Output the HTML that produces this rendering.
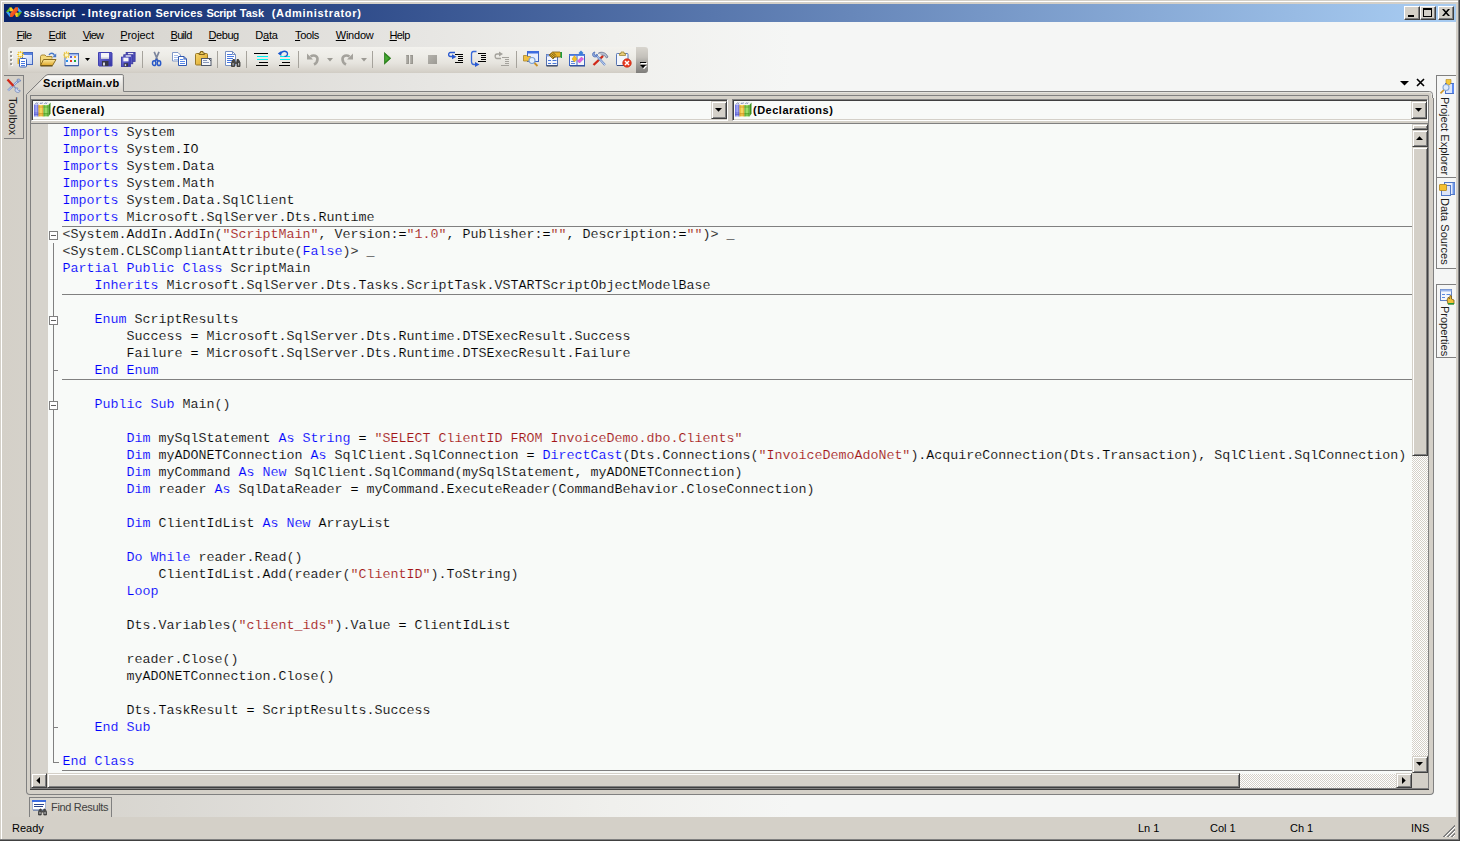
<!DOCTYPE html>
<html>
<head>
<meta charset="utf-8">
<title>ssisscript</title>
<style>
html,body{margin:0;padding:0;}
body{width:1460px;height:841px;overflow:hidden;background:#d4d0c8;font-family:"Liberation Sans",sans-serif;font-size:11px;color:#000;position:relative;}
div,span,pre{box-sizing:border-box;}
.abs{position:absolute;}
#win{position:absolute;left:0;top:0;width:1460px;height:841px;background:#d4d0c8;overflow:hidden;}
/* outer window edge */
#edge-l{left:1px;top:1px;width:1px;height:838px;background:#fff;}
#edge-t{left:1px;top:1px;width:1457px;height:1px;background:#fff;}
#edge-r1{left:1458px;top:0;width:1px;height:840px;background:#808080;}
#edge-r2{left:1459px;top:0;width:1px;height:841px;background:#404040;}
#edge-b1{left:0;top:839px;width:1459px;height:1px;background:#808080;}
#edge-b2{left:0;top:840px;width:1460px;height:1px;background:#404040;}
/* upper gradient strip (menu + toolbar background) */
#topgrad{left:2px;top:22px;width:1454px;height:795px;background:linear-gradient(90deg,#d4d0c8 0px,#dad8d3 160px,#e6e5e2 410px,#f0f0ed 610px,#f5f6f5 790px,#f5f6f5 1454px);}
#title{left:4px;top:4px;width:1452px;height:18px;background:linear-gradient(90deg,#0a246a 0px,#a6caf0 1420px,#a6caf0 1452px);}
#title .txt{position:absolute;left:0;top:2px;font-weight:bold;font-size:11px;color:#fff;white-space:nowrap;line-height:14px;}
#title .txt span{position:absolute;top:0;white-space:nowrap;}
.tbtn{position:absolute;top:2px;width:16px;height:14px;background:#d4d0c8;border:1px solid;border-color:#fff #404040 #404040 #fff;box-shadow:inset -1px -1px 0 #808080;}
#menu{left:4px;top:23px;width:600px;height:23px;}
#menu span{position:absolute;top:6px;font-size:11px;line-height:13px;white-space:nowrap;}
#menu span u{text-decoration:underline;}
.tsep{top:51px;width:1px;height:17px;background:#a6a39c;}

.vtext{writing-mode:vertical-rl;font-size:11px;line-height:14px;white-space:nowrap;color:#1c1c1c;}
.combo{height:22px;background:#f8faf8;border:1px solid;border-color:#808080 #fff #fff #808080;box-shadow:inset 1px 1px 0 #404040,inset -1px -1px 0 #d4d0c8;}
.combo .bk{left:2px;top:2px;}
.combo .ctext{position:absolute;top:3px;letter-spacing:0.5px;font-weight:bold;font-size:11px;line-height:14px;white-space:nowrap;}
.cbtn{position:absolute;top:1px;width:16px;height:18px;background:#d4d0c8;border:1px solid;border-color:#d4d0c8 #404040 #404040 #d4d0c8;box-shadow:inset 1px 1px 0 #fff,inset -1px -1px 0 #808080;}
#code{position:absolute;left:31.5px;top:0;margin:0;font-family:"Liberation Mono",monospace;font-size:13.3333px;line-height:17px;color:#000;white-space:pre;-webkit-text-stroke:0.14px #f8faf8;}
#code i{font-style:normal;-webkit-text-stroke:0;}
#code .k{color:#0000ff;}
#code .s{color:#a31515;}
.hsep{left:31px;width:1350px;height:1px;background:#808080;}
.obox{left:18px;width:9px;height:9px;border:1px solid #808080;background:#fff;}
.obox:after{content:"";position:absolute;left:1px;top:3px;width:5px;height:1px;background:#606060;}

.dith{background-color:#e9e7e3;background-image:conic-gradient(#fff 25%,#d4d0c8 0 50%,#fff 0 75%,#d4d0c8 0);background-size:2px 2px;}
.sbtn{background:#d4d0c8;border:1px solid;border-color:#d4d0c8 #404040 #404040 #d4d0c8;box-shadow:inset 1px 1px 0 #fff,inset -1px -1px 0 #808080;}
.rtab{width:20px;border:1px solid #808080;border-right:none;background:#f5f6f5;}
#status span{position:absolute;top:5px;font-size:11px;line-height:13px;white-space:nowrap;}
</style>
</head>
<body>
<div id="win">
<svg width="0" height="0" style="position:absolute"><defs>
<linearGradient id="gb1" x1="0" y1="0" x2="1" y2="0"><stop offset="0" stop-color="#6a6ee0"/><stop offset="0.5" stop-color="#a8aef8"/><stop offset="1" stop-color="#5a5ed0"/></linearGradient>
<linearGradient id="gb2" x1="0" y1="0" x2="1" y2="0"><stop offset="0" stop-color="#e8a820"/><stop offset="0.5" stop-color="#fce070"/><stop offset="1" stop-color="#e0a020"/></linearGradient>
<linearGradient id="gb3" x1="0" y1="0" x2="1" y2="0"><stop offset="0" stop-color="#58b030"/><stop offset="0.5" stop-color="#a8e878"/><stop offset="1" stop-color="#50a828"/></linearGradient>
</defs></svg>
<div class="abs" id="topgrad"></div>
<div class="abs" id="title">
  <svg class="abs" style="left:2px;top:3px" width="16" height="10" viewBox="0 0 16 10">
    <defs><linearGradient id="gred" x1="0" y1="0" x2="1" y2="1"><stop offset="0" stop-color="#ff9a28"/><stop offset="0.6" stop-color="#f04a20"/><stop offset="1" stop-color="#c82010"/></linearGradient></defs>
    <path d="M0 5L3.600 0.500L6 0.500L4 5z" fill="#58b828"/>
    <path d="M3.600 0.500H5.500L8 3.500L4 5z" fill="#fcd020"/>
    <path d="M0 5H4L4.500 10H3.800z" fill="#38a0f0"/>
    <path d="M12 0.200L16 5H12z" fill="#38a8f8"/>
    <path d="M16 5L12.500 9.800H10.500L12 5z" fill="#60b828"/>
    <path d="M8.500 6L12 5L11.500 10H10z" fill="#fcc818"/>
    <path d="M4 10L4.300 6.500L9.500 0.200H12L12 3.500L6.500 10z" fill="url(#gred)"/>
    <circle cx="3.900" cy="5" r="0.950" fill="#0a246a"/>
    <circle cx="12" cy="5.100" r="0.950" fill="#0a246a"/>
  </svg>
  <div class="txt"><span style="left:19.5px;letter-spacing:0.07px">ssisscript</span><span style="left:77.5px">-</span><span style="left:83.7px;letter-spacing:0.67px">Integration</span><span style="left:151.5px;letter-spacing:0.28px">Services</span><span style="left:202.5px;letter-spacing:-0.3px">Script</span><span style="left:235.7px;letter-spacing:0.08px">Task</span><span style="left:267.7px;letter-spacing:0.7px">(Administrator)</span></div>
  <div class="tbtn" style="left:1400px"><div class="abs" style="left:3px;top:8px;width:6px;height:2px;background:#000"></div></div>
  <div class="tbtn" style="left:1416px"><div class="abs" style="left:2px;top:1px;width:9px;height:9px;border:1px solid #000;border-top-width:2px"></div></div>
  <div class="tbtn" style="left:1434px"><svg class="abs" style="left:3px;top:2px" width="8" height="7" viewBox="0 0 8 7"><path d="M0 0h2l2 2.3L6 0h2L5 3.5 8 7H6L4 4.7 2 7H0l3-3.5z" fill="#000"/></svg></div>
</div>
<div class="abs" id="menu">
  <span style="left:12.50px;letter-spacing:-0.74px"><u>F</u>ile</span>
  <span style="left:44.50px;letter-spacing:-0.49px"><u>E</u>dit</span>
  <span style="left:78.75px;letter-spacing:-0.80px"><u>V</u>iew</span>
  <span style="left:116.25px;letter-spacing:-0.08px"><u>P</u>roject</span>
  <span style="left:166.50px;letter-spacing:-0.68px"><u>B</u>uild</span>
  <span style="left:204.50px;letter-spacing:-0.42px"><u>D</u>ebug</span>
  <span style="left:251.25px;letter-spacing:-0.17px">D<u>a</u>ta</span>
  <span style="left:291.00px;letter-spacing:-0.36px"><u>T</u>ools</span>
  <span style="left:331.75px;letter-spacing:-0.23px"><u>W</u>indow</span>
  <span style="left:385.50px;letter-spacing:-0.62px"><u>H</u>elp</span>
</div>
<div class="abs" id="toolbar" style="left:8px;top:47px;width:628px;height:26px;border-radius:3px 0 0 3px;background:linear-gradient(180deg,#f3f2ee 0px,#eeede8 8px,#e6e4de 16px,#d6d2ca 24px,#d0ccc4 26px);"></div>
<div class="abs" id="tbover" style="left:636px;top:47px;width:12px;height:26px;border-radius:0 3px 3px 0;background:linear-gradient(180deg,#d8d5ce 0px,#c4c1bb 10px,#9a9894 19px,#7e7d7a 26px);">
  <div class="abs" style="left:5px;top:16px;width:6px;height:1px;background:#fff"></div>
  <div class="abs" style="left:4px;top:15px;width:6px;height:1px;background:#000"></div>
  <svg class="abs" style="left:4px;top:18px" width="7" height="5" viewBox="0 0 7 5"><path d="M1 1h6L4 4.200z" fill="#fff"/><path d="M0 0h6L3 3.200z" fill="#000"/></svg>
</div>
<!-- grip -->
<div class="abs" style="left:10px;top:51px;width:2px;height:14px;background:repeating-linear-gradient(180deg,#9c9a94 0px,#9c9a94 2px,transparent 2px,transparent 4px);"></div>
<div class="abs" style="left:11px;top:52px;width:2px;height:14px;background:repeating-linear-gradient(180deg,#fff 0px,#fff 2px,transparent 2px,transparent 4px);opacity:.8"></div>
<div class="abs" style="left:10px;top:51px;width:2px;height:14px;background:repeating-linear-gradient(180deg,#9c9a94 0px,#9c9a94 2px,transparent 2px,transparent 4px);"></div>
<!-- separators -->
<div class="abs tsep" style="left:142px"></div>
<div class="abs tsep" style="left:217px"></div>
<div class="abs tsep" style="left:246px"></div>
<div class="abs tsep" style="left:298px"></div>
<div class="abs tsep" style="left:372px"></div>
<div class="abs tsep" style="left:516px"></div>
<!-- 1 new project -->
<svg class="abs" style="left:17px;top:51px" width="17" height="17" viewBox="0 0 17 17">
  <defs><linearGradient id="gw" x1="0" y1="0" x2="1" y2="1"><stop offset="0" stop-color="#fff"/><stop offset="1" stop-color="#b8ccf4"/></linearGradient></defs>
  <rect x="5.5" y="1.5" width="10" height="12" fill="url(#gw)" stroke="#4468c0"/>
  <rect x="6" y="2" width="9" height="2" fill="#5a84e0"/>
  <path d="M3.5 0v7M0 3.5h7M1 1l5 5M6 1l-5 5" stroke="#f4c830" stroke-width="1.2"/>
  <rect x="2" y="2" width="3" height="3" fill="#fff6c0"/>
  <rect x="0.5" y="7" width="2" height="6" fill="#e8b830"/>
  <rect x="2.5" y="7.500" width="7" height="8.500" rx="1" fill="#fff" stroke="#3860b8"/>
  <path d="M4 10.500h4M4 12.500h4M4 14.500h4" stroke="#4878e0" stroke-width="1"/>
</svg>
<!-- 2 open -->
<svg class="abs" style="left:40px;top:51px" width="17" height="17" viewBox="0 0 17 17">
  <defs><linearGradient id="gf" x1="0" y1="0" x2="0" y2="1"><stop offset="0" stop-color="#fbe8a0"/><stop offset="1" stop-color="#e0a828"/></linearGradient></defs>
  <path d="M0.500 14.500V5.500l1-1.500h3.500l1.500 1.500h5.500v2" fill="#f4d878" stroke="#a88838"/>
  <path d="M0.500 14.500L3.500 8.500h12.500l-3.500 6z" fill="url(#gf)" stroke="#8c6c20"/>
  <path d="M0.500 15h12" stroke="#5a4410" stroke-width="1"/>
  <path d="M9 4c1.500-2.500 4.500-2.500 5.500 0.500" fill="none" stroke="#4878c8" stroke-width="1.400"/>
  <path d="M16.200 2.500v3.800h-3.800z" fill="#4878c8"/>
</svg>
<!-- 3 add item -->
<svg class="abs" style="left:63px;top:51px" width="17" height="17" viewBox="0 0 17 17">
  <rect x="2" y="2.500" width="13.500" height="12" fill="#eef2fb" stroke="#4a6eb8"/>
  <rect x="2.500" y="3" width="12.500" height="1.500" fill="#9ab4ec"/>
  <path d="M2 14.800h13.500" stroke="#3a5aa0"/>
  <rect x="7" y="5" width="2" height="2" fill="#5a5ad8"/><rect x="11" y="5" width="2" height="2" fill="#f0a020"/>
  <rect x="3" y="9" width="2" height="2" fill="#2890e8"/><rect x="7" y="9" width="2" height="2" fill="#e83820"/><rect x="11" y="9" width="2" height="2" fill="#20a838"/>
  <path d="M3.500 0.500v7M0 4h7M1 1.500l5 5M6 1.500l-5 5" stroke="#f4c830" stroke-width="1.200"/>
  <rect x="2" y="2.500" width="3" height="3" fill="#fff6c0"/>
</svg>
<svg class="abs" style="left:85px;top:58px" width="5" height="3" viewBox="0 0 5 3"><path d="M0 0h5L2.500 3z" fill="#000"/></svg>
<!-- 4 save -->
<svg class="abs" style="left:98px;top:52px" width="15" height="15" viewBox="0 0 15 15">
  <defs><linearGradient id="gs" x1="0" y1="0" x2="1" y2="1"><stop offset="0" stop-color="#7878e0"/><stop offset="1" stop-color="#3030a0"/></linearGradient></defs>
  <path d="M0.500 0.500h13l0.500 0.500v13h-13l-0.500-0.500z" fill="url(#gs)" stroke="#4040b0"/>
  <rect x="3" y="1" width="8" height="6" fill="#f4f4f8"/>
  <rect x="3" y="5.500" width="8" height="1.500" fill="#c8c8d8"/>
  <rect x="4" y="9" width="6.500" height="5" fill="#383848"/>
  <rect x="5" y="10.500" width="2" height="3" fill="#d8d8e0"/>
</svg>
<!-- 5 save all -->
<svg class="abs" style="left:121px;top:52px" width="15" height="15" viewBox="0 0 16 16">
  <rect x="5.500" y="0.500" width="9.500" height="9.500" fill="#5050b8" stroke="#3c3ca0"/>
  <rect x="7.500" y="1" width="5.500" height="2" fill="#e8e8f4"/>
  <rect x="3" y="3" width="9.500" height="9.500" fill="#5858c0" stroke="#3c3ca0"/>
  <rect x="5" y="3.500" width="5.500" height="2" fill="#e8e8f4"/>
  <rect x="0.500" y="5.500" width="9.500" height="10" fill="url(#gs)" stroke="#4040b0"/>
  <rect x="2.500" y="6" width="5.500" height="4" fill="#f4f4f8"/>
  <rect x="3" y="12" width="4.500" height="3.500" fill="#383848"/>
  <rect x="4" y="13" width="1.500" height="2" fill="#d8d8e0"/>
</svg>
<!-- 6 cut -->
<svg class="abs" style="left:151px;top:51px" width="11" height="16" viewBox="0 0 11 16">
  <path d="M3.200 0.800L6.800 9.500M8 0.800L4.400 9.500" stroke="#7c859c" stroke-width="1.700" fill="none"/>
  <ellipse cx="3.200" cy="12.200" rx="1.700" ry="2.400" fill="none" stroke="#2858c8" stroke-width="1.500"/>
  <ellipse cx="8" cy="12.200" rx="1.700" ry="2.400" fill="none" stroke="#2858c8" stroke-width="1.500"/>
  <path d="M4.200 10l1.400-1.600 1.400 1.600" stroke="#2858c8" stroke-width="1.300" fill="none"/>
</svg>
<!-- 7 copy -->
<svg class="abs" style="left:172px;top:52px" width="16" height="15" viewBox="0 0 16 15">
  <path d="M0.500 0.500h5.500l2.500 2.500v6h-8z" fill="#fff" stroke="#8098c8"/>
  <path d="M2 3.500h4M2 5.500h5M2 7.500h5" stroke="#a8c0ec"/>
  <path d="M6.500 4.500h5.500l2.500 2.500v6.500h-8z" fill="#fff" stroke="#3058b0"/>
  <path d="M8 7.500h3.500M8 9.500h5M8 11.500h5" stroke="#5888e8"/>
  <path d="M12 4.500v2.500h2.500" fill="none" stroke="#3058b0"/>
</svg>
<!-- 8 paste -->
<svg class="abs" style="left:195px;top:51px" width="17" height="16" viewBox="0 0 17 16">
  <defs><linearGradient id="gp" x1="0" y1="0" x2="1" y2="1"><stop offset="0" stop-color="#f8d870"/><stop offset="1" stop-color="#d8a020"/></linearGradient></defs>
  <rect x="0.500" y="2.500" width="12" height="11.500" rx="1" fill="url(#gp)" stroke="#987828"/>
  <path d="M4 3.500v-1.500h1.500v-1.500h2.500v1.500h1.500v1.500z" fill="#e8c860" stroke="#80641c"/>
  <rect x="6.500" y="7.500" width="9.500" height="7" fill="#f4f6fa" stroke="#505868"/>
  <path d="M8 9.500h4M8 11.500h6" stroke="#8898b8"/>
  <path d="M13.500 7.500l2.500 2.500" stroke="#505868"/>
</svg>
<!-- 9 find -->
<svg class="abs" style="left:225px;top:51px" width="16" height="17" viewBox="0 0 16 17">
  <path d="M0.500 0.500h7l3 3v11h-10z" fill="#fff" stroke="#7890c0"/>
  <path d="M2 3.500h5M2 5.500h7M2 7.500h6M2 9.500h5M2 11.500h4" stroke="#4878e0"/>
  <path d="M7.500 0.500v3h3" fill="none" stroke="#7890c0"/>
  <path d="M6.500 15.500v-4l1.500-3h1.500v7zM15 15.500v-4l-1.500-3h-1.500v7z" fill="#484848" stroke="#303030" stroke-width="0.800"/>
  <rect x="9.500" y="10.500" width="2.500" height="2.500" fill="#505050"/>
  <rect x="7.500" y="12" width="1.200" height="2.500" fill="#b0b0b0"/><rect x="13" y="12" width="1.200" height="2.500" fill="#b0b0b0"/>
</svg>
<!-- 10 indent -->
<div class="abs" style="left:254px;top:53px;width:14px;height:1px;background:#000"></div>
<div class="abs" style="left:257px;top:56px;width:11px;height:1px;background:#00f0f0"></div>
<div class="abs" style="left:257px;top:59px;width:11px;height:1px;background:#00f0f0"></div>
<div class="abs" style="left:259px;top:62px;width:9px;height:1px;background:#000"></div>
<div class="abs" style="left:256px;top:65px;width:12px;height:1px;background:#000"></div>
<!-- 11 unindent -->
<svg class="abs" style="left:277px;top:50px" width="15" height="18" viewBox="0 0 15 18">
  <rect x="3" y="6" width="10" height="1" fill="#00f0f0"/>
  <rect x="3" y="9" width="10" height="1" fill="#00f0f0"/>
  <rect x="5" y="12" width="8" height="1" fill="#000"/>
  <rect x="2" y="15" width="11" height="1" fill="#000"/>
  <path d="M4 3.500c1-3 6-3 6.500 0c0.300 1.800-1.500 3-3 2.800" fill="none" stroke="#1858d0" stroke-width="1.300"/>
  <path d="M0.800 3.500l3.500-2.500v5z" fill="#1858d0"/>
</svg>
<!-- 12 undo -->
<svg class="abs" style="left:306px;top:51px" width="14" height="15" viewBox="0 0 14 15">
  <path d="M4.500 5.500c3-2 7-1 7 2.500c0 2.500-1.500 4.500-3.500 5.500" fill="none" stroke="#a4a29c" stroke-width="2.600"/>
  <path d="M1 2.500v6h6z" fill="#a4a29c"/>
</svg>
<svg class="abs" style="left:327px;top:58px" width="6" height="4" viewBox="0 0 6 4"><path d="M0 0h6L3 3.500z" fill="#9c9a94"/></svg>
<!-- 13 redo -->
<svg class="abs" style="left:340px;top:51px" width="14" height="15" viewBox="0 0 14 15">
  <path d="M9.500 5.500c-3-2-7-1-7 2.500c0 2.500 1.500 4.500 3.500 5.500" fill="none" stroke="#a4a29c" stroke-width="2.600"/>
  <path d="M13 2.500v6h-6z" fill="#a4a29c"/>
</svg>
<svg class="abs" style="left:361px;top:58px" width="6" height="4" viewBox="0 0 6 4"><path d="M0 0h6L3 3.500z" fill="#9c9a94"/></svg>
<!-- 15 play -->
<svg class="abs" style="left:384px;top:52px" width="8" height="13" viewBox="0 0 8 13"><path d="M0.300 0.500L6.800 6.300L0.300 12.200z" fill="#2c8c1c" stroke="#186808" stroke-width="0.600"/><path d="M1.200 3l3.800 3.300-3.800 3.400z" fill="#48a834"/></svg>
<!-- 16 pause -->
<div class="abs" style="left:406px;top:55px;width:3px;height:9px;background:#a8a6a0;border:1px solid #98968f;border-left-color:#b4b2ac"></div>
<div class="abs" style="left:410px;top:55px;width:3px;height:9px;background:#a8a6a0;border:1px solid #98968f;border-left-color:#b4b2ac"></div>
<!-- 17 stop -->
<div class="abs" style="left:428px;top:55px;width:9px;height:9px;background:linear-gradient(135deg,#b4b2ac,#9c9a94);"></div>
<!-- 18 step into -->
<svg class="abs" style="left:447px;top:51px" width="17" height="13" viewBox="0 0 17 13">
  <path d="M8 3.500h8M11 5.500h5M11 7.500h5M11 9.500h5M8 11.500h8" stroke="#000" stroke-width="1"/>
  <path d="M8 1.500h-4.500c-2.500 0-2.500 4 0 4h2" fill="none" stroke="#2858d0" stroke-width="1.300"/>
  <path d="M5 3.200l4.500 2.500-4.500 2.500z" fill="#2858d0"/>
</svg>
<!-- 19 step over -->
<svg class="abs" style="left:470px;top:50px" width="17" height="17" viewBox="0 0 17 17">
  <path d="M8 3.500h8M11 5.500h5M11 7.500h5M11 9.500h5M8 11.500h8" stroke="#000" stroke-width="1"/>
  <path d="M6.500 1.500h-3c-1.500 0-2 1-2 2.500v7.500c0 2 1 3 2.500 3h2" fill="none" stroke="#3868d8" stroke-width="1.300"/>
  <path d="M5 12l4.500 2.500-4.500 2.500z" fill="#2858d0"/>
</svg>
<!-- 20 step out -->
<svg class="abs" style="left:493px;top:50px" width="17" height="17" viewBox="0 0 17 17">
  <path d="M9 7.500h7M12 9.500h4M12 11.500h4M12 13.500h4M8 15.500h8" stroke="#a4a29c" stroke-width="1"/>
  <path d="M8 8.500h-4c-2.500 0-2.500-4.500 0-4.500h3" fill="none" stroke="#a4a29c" stroke-width="1.300"/>
  <path d="M6 1.500l4 2.500-4 2.500z" fill="#a4a29c"/>
</svg>
<!-- 22 browser/find in window -->
<svg class="abs" style="left:523px;top:50px" width="17" height="17" viewBox="0 0 17 17">
  <rect x="4.500" y="1.500" width="11" height="10" fill="#e8eefc" stroke="#3c64c0"/>
  <rect x="4.500" y="1" width="11" height="2.500" fill="#3c6ce0"/>
  <path d="M0.500 5.500h3l1 1h3v4.500h-7z" fill="#f0c040" stroke="#a88428" stroke-width="0.800"/>
  <circle cx="9" cy="10.500" r="3" fill="#e4f0fc" stroke="#7aa0d8" stroke-width="1.200"/>
  <path d="M11.500 13l3 3" stroke="#c89028" stroke-width="1.800"/>
</svg>
<!-- 23 properties window -->
<svg class="abs" style="left:545px;top:50px" width="18" height="17" viewBox="0 0 18 17">
  <rect x="1.500" y="4.500" width="11" height="11" fill="#f4f6fc" stroke="#5470b0"/>
  <rect x="1.500" y="4.500" width="11" height="2" fill="#8aa8e8"/>
  <path d="M3 10.500h3M7.500 10.500h4M3 13.500h3M7.500 13.500h4" stroke="#4878d8"/>
  <path d="M1.500 16h11" stroke="#303848"/>
  <path d="M4 5l3.500-3h7.500l1 1v3l-1 1h-5l-2 2z" fill="#e8b428" stroke="#7c5c10" stroke-width="0.800"/>
  <path d="M5 4.500l4 3.500M6.500 3.500l4 3.500M8 2.500l3 3" stroke="#3c3010" stroke-width="0.700"/>
  <rect x="15.500" y="2" width="1.500" height="6" fill="#1c9c3c"/>
</svg>
<!-- 24 toolbox/object browser -->
<svg class="abs" style="left:568px;top:50px" width="18" height="17" viewBox="0 0 18 17">
  <rect x="1.500" y="4.500" width="15" height="11" fill="#f4f6fc" stroke="#3c64c0"/>
  <rect x="1.500" y="4.500" width="15" height="1.500" fill="#5a88e8"/>
  <path d="M9 6v9" stroke="#3c64c0"/>
  <path d="M2 16h15" stroke="#28448c"/>
  <path d="M3 11.500h4M3 13.500h4" stroke="#5888e0"/>
  <path d="M6.500 5.500l2.500 3.500-2.500 3-2.500-3z" fill="#f4c020" stroke="#c89418" stroke-width="0.500"/>
  <path d="M9.500 11l4-4 2 2-4 4z" fill="#e060e0" stroke="#b040b0" stroke-width="0.500"/>
  <path d="M10.500 3l2.500-2.500 2.500 2.500-2.500 2.500z" fill="#3c80d8"/>
</svg>
<!-- 25 tools -->
<svg class="abs" style="left:591px;top:51px" width="18" height="16" viewBox="0 0 18 16">
  <path d="M7 2.500c2.500-2 6-1.500 8.500 1l1.500 2.500-1.500 1-2-2.500-3-0.500" fill="#b8c0d0" stroke="#707c98" stroke-width="0.900"/>
  <path d="M12 5l-9.500 9" stroke="#d02818" stroke-width="2.400"/>
  <path d="M9.500 7l-2 2" stroke="#889" stroke-width="2.400"/>
  <path d="M4.500 3.500l9.500 10.500" stroke="#6084c8" stroke-width="2"/>
  <path d="M4.500 3.500l9.500 10.500" stroke="#e4ecfa" stroke-width="0.800"/>
  <path d="M1.500 3.500c0-1.500 1-2.500 2.500-2.500l-1 2 1.500 1.500 2-1c0 1.500-1 2.500-2.500 2.500s-2.500-1-2.500-2.500z" fill="#88a4dc" stroke="#4868b0" stroke-width="0.700"/>
</svg>
<!-- 26 clipboard red x -->
<svg class="abs" style="left:615px;top:50px" width="18" height="18" viewBox="0 0 18 18">
  <rect x="1.500" y="3.500" width="11.500" height="12" rx="0.800" fill="#f4f6fc" stroke="#5878b8"/>
  <path d="M2 15.500h11" stroke="#384c80"/>
  <path d="M4.500 5.500v-2h1.500v-1.500h3v1.500h1.500v2z" fill="#e8cc78" stroke="#a08838" stroke-width="0.800"/>
  <circle cx="12" cy="13" r="4.300" fill="#e83820" stroke="#c02810" stroke-width="0.600"/>
  <path d="M10 11l4 4M14 11l-4 4" stroke="#fff" stroke-width="1.500"/>
</svg>

<!--TABS-->
<!-- left toolbox tab -->
<div class="abs" id="toolboxtab" style="left:4px;top:75px;width:20px;height:64px;border-right:1px solid #808080;border-bottom:1px solid #808080;border-top:1px solid #808080;background:#d4d0c8;">
  <svg class="abs" style="left:2px;top:2px" width="16" height="16" viewBox="0 0 16 16">
    <path d="M12.500 2.500l-10.500 10" stroke="#6c88c8" stroke-width="2"/>
    <path d="M12.500 2.500l-10.500 10" stroke="#f0f4fc" stroke-width="0.800"/>
    <path d="M1.500 1.500l6 6.500" stroke="#d02818" stroke-width="2.400"/>
    <path d="M7.500 8l3 3" stroke="#8a98b8" stroke-width="1.600"/>
    <path d="M11 1.500c1.500-1.200 3.500-0.200 3.800 1.500l-2 0.300-0.800 1.500z" fill="#a8b8e0" stroke="#6078b0" stroke-width="0.600"/>
    <path d="M9 12c0-1.500 1.500-2.500 3-2l-0.500 1.500 1 1 1.500-0.500c0.500 1.500-1 3-2.500 2.500s-2.500-1-2.500-2.500z" fill="#c8d4f0" stroke="#6078b0" stroke-width="0.600"/>
  </svg>
  <div class="abs vtext" style="left:2px;top:21px;height:40px;">Toolbox</div>
</div>
<!-- document tab strip -->
<svg class="abs" style="left:24px;top:72px" width="1412" height="26" viewBox="0 0 1412 26">
  <defs><linearGradient id="gtab" x1="0" y1="0" x2="0" y2="1"><stop offset="0" stop-color="#fcfcfb"/><stop offset="1" stop-color="#d4d0c8"/></linearGradient></defs>
  <!-- frame outline with tab -->
  <path d="M2.500 26V22.500L20.500 4.500Q22 3 24 2.500H98Q99.500 2.500 99.500 4.500V19.500H1405.500Q1408.500 19.500 1408.500 22.500V26" fill="none" stroke="#808080" stroke-width="1"/>
  <path d="M3.500 24.500V22.800L21 5.300Q22.500 3.500 24 3.500H98.500V20.500H1405Q1407.500 20.500 1407.500 23V26H3.500z" fill="#d4d0c8"/>
  <path d="M21 5.300Q22.500 3.500 24 3.500H98.500V20.500H6z" fill="url(#gtab)"/>
  <path d="M6.500 23.500H1404.500" stroke="#808080"/>
</svg>
<div class="abs" style="left:43px;top:76px;font-weight:bold;font-size:11px;line-height:14px;white-space:nowrap;letter-spacing:0.34px;">ScriptMain.vb</div>
<!-- tab strip right controls -->
<svg class="abs" style="left:1400px;top:81px" width="9" height="5" viewBox="0 0 9 5"><path d="M0 0h9L4.500 4.500z" fill="#000"/></svg>
<svg class="abs" style="left:1416px;top:78px" width="9" height="9" viewBox="0 0 9 9"><path d="M1 1l7 7M8 1l-7 7" stroke="#000" stroke-width="1.600"/></svg>
<!-- document frame body -->
<div class="abs" id="docframe" style="left:26px;top:98px;width:1408px;height:697px;border:1px solid #808080;border-top:none;border-radius:0 0 4px 4px;background:#d4d0c8;"></div>
<div class="abs" style="left:30px;top:95px;width:1px;height:695px;background:#808080"></div>
<div class="abs" style="left:1428px;top:96px;width:1px;height:694px;background:#808080"></div>
<div class="abs" style="left:30px;top:788px;width:1399px;height:1px;background:#808080"></div>
<div class="abs" style="left:30px;top:789px;width:1399px;height:1px;background:#404040"></div>
<!-- combos -->
<div class="abs combo" style="left:31px;top:99px;width:697px;">
  <svg class="abs bk" width="17" height="15" viewBox="0 0 17 15"><path d="M0.500 3l2-2.500h13v11l-2 2.500z" fill="#f4f4f4"/>
<path d="M2.500 0.500l-1 1.500M4 0.500l-1 1.500M7 0.500l-1 1.500M8.500 0.500l-1 1.500M11.500 0.500l-1 1.500M13 0.500l-1 1.500" stroke="#5060a0" stroke-width="0.700"/>
<rect x="0" y="2.500" width="4.500" height="12" fill="url(#gb1)"/>
<rect x="4.500" y="3" width="5" height="11.500" fill="url(#gb2)"/>
<rect x="9.500" y="3" width="5" height="11.500" fill="url(#gb3)"/>
<path d="M14.500 3l2-2.500v11l-2 3z" fill="#3c9020"/>
<path d="M0 11h4.500M0 12.500h4.500" stroke="#4a4ec0" stroke-width="0.600"/>
<path d="M4.500 5h5M4.500 11.500h5M4.500 13h5" stroke="#c88818" stroke-width="0.600"/>
<path d="M9.500 5h5M9.500 11.500h5M9.500 13h5" stroke="#409018" stroke-width="0.600"/></svg>
  <div class="ctext" style="left:20px">(General)</div>
  <div class="cbtn" style="left:679px"><svg class="abs" style="left:3px;top:6px" width="7" height="4" viewBox="0 0 7 4"><path d="M0 0h7L3.500 3.700z" fill="#000"/></svg></div>
</div>
<div class="abs combo" style="left:732px;top:99px;width:696px;">
  <svg class="abs bk" width="17" height="15" viewBox="0 0 17 15"><path d="M0.500 3l2-2.500h13v11l-2 2.500z" fill="#f4f4f4"/>
<path d="M2.500 0.500l-1 1.500M4 0.500l-1 1.500M7 0.500l-1 1.500M8.500 0.500l-1 1.500M11.500 0.500l-1 1.500M13 0.500l-1 1.500" stroke="#5060a0" stroke-width="0.700"/>
<rect x="0" y="2.500" width="4.500" height="12" fill="url(#gb1)"/>
<rect x="4.500" y="3" width="5" height="11.500" fill="url(#gb2)"/>
<rect x="9.500" y="3" width="5" height="11.500" fill="url(#gb3)"/>
<path d="M14.500 3l2-2.500v11l-2 3z" fill="#3c9020"/>
<path d="M0 11h4.500M0 12.500h4.500" stroke="#4a4ec0" stroke-width="0.600"/>
<path d="M4.500 5h5M4.500 11.500h5M4.500 13h5" stroke="#c88818" stroke-width="0.600"/>
<path d="M9.500 5h5M9.500 11.500h5M9.500 13h5" stroke="#409018" stroke-width="0.600"/></svg>
  <div class="ctext" style="left:20px">(Declarations)</div>
  <div class="cbtn" style="left:678px"><svg class="abs" style="left:3px;top:6px" width="7" height="4" viewBox="0 0 7 4"><path d="M0 0h7L3.500 3.700z" fill="#000"/></svg></div>
</div>
<div class="abs" style="left:31px;top:123px;width:1397px;height:1px;background:#808080"></div>
<!-- editor -->
<div class="abs" id="editor" style="left:31px;top:124px;width:1381px;height:649px;background:#f8faf8;overflow:hidden;">
  <div class="abs" style="left:0;top:0;width:17px;height:649px;background:#d6d3cc;"></div>
  <!-- separators -->
  <div class="abs hsep" style="top:102px"></div>
  <div class="abs hsep" style="top:170px"></div>
  <div class="abs hsep" style="top:255px"></div>
  <div class="abs hsep" style="top:646px"></div>
  <!-- outline -->
  <div class="abs" style="left:22px;top:119px;width:1px;height:520px;background:#808080"></div>
  <div class="abs obox" style="top:107px"></div>
  <div class="abs obox" style="top:192px"></div>
  <div class="abs obox" style="top:277px"></div>
  <div class="abs" style="left:22px;top:246px;width:5px;height:1px;background:#808080"></div>
  <div class="abs" style="left:22px;top:603px;width:5px;height:1px;background:#808080"></div>
  <div class="abs" style="left:22px;top:638px;width:6px;height:1px;background:#808080"></div>
<pre id="code"><span class="k">Imports</span> System
<span class="k">Imports</span> System.IO
<span class="k">Imports</span> System.Data
<span class="k">Imports</span> System.Math
<span class="k">Imports</span> System.Data.SqlClient
<span class="k">Imports</span> Microsoft.SqlServer.Dts.Runtime
&lt;System.AddIn.AddIn(<span class="s">"ScriptMain"</span>, Version:<i>=</i><span class="s">"1.0"</span>, Publisher:<i>=</i><span class="s">""</span>, Description:<i>=</i><span class="s">""</span>)&gt; <i>_</i>
&lt;System.CLSCompliantAttribute(<span class="k">False</span>)&gt; <i>_</i>
<span class="k">Partial Public Class</span> ScriptMain
    <span class="k">Inherits</span> Microsoft.SqlServer.Dts.Tasks.ScriptTask.VSTARTScriptObjectModelBase

    <span class="k">Enum</span> ScriptResults
        Success <i>=</i> Microsoft.SqlServer.Dts.Runtime.DTSExecResult.Success
        Failure <i>=</i> Microsoft.SqlServer.Dts.Runtime.DTSExecResult.Failure
    <span class="k">End Enum</span>

    <span class="k">Public Sub</span> Main()

        <span class="k">Dim</span> mySqlStatement <span class="k">As String</span> <i>=</i> <span class="s">"SELECT ClientID FROM InvoiceDemo.dbo.Clients"</span>
        <span class="k">Dim</span> myADONETConnection <span class="k">As</span> SqlClient.SqlConnection <i>=</i> <span class="k">DirectCast</span>(Dts.Connections(<span class="s">"InvoiceDemoAdoNet"</span>).AcquireConnection(Dts.Transaction), SqlClient.SqlConnection)
        <span class="k">Dim</span> myCommand <span class="k">As New</span> SqlClient.SqlCommand(mySqlStatement, myADONETConnection)
        <span class="k">Dim</span> reader <span class="k">As</span> SqlDataReader <i>=</i> myCommand.ExecuteReader(CommandBehavior.CloseConnection)

        <span class="k">Dim</span> ClientIdList <span class="k">As New</span> ArrayList

        <span class="k">Do While</span> reader.Read()
            ClientIdList.Add(reader(<span class="s">"ClientID"</span>).ToString)
        <span class="k">Loop</span>

        Dts.Variables(<span class="s">"client<i>_</i>ids"</span>).Value <i>=</i> ClientIdList

        reader.Close()
        myADONETConnection.Close()

        Dts.TaskResult <i>=</i> ScriptResults.Success
    <span class="k">End Sub</span>

<span class="k">End Class</span></pre>
</div>
<!-- vertical scrollbar -->
<div class="abs dith" style="left:1412px;top:124px;width:16px;height:649px;"></div>
<div class="abs sbtn" style="left:1412px;top:124px;width:16px;height:6px;"></div>
<div class="abs sbtn" style="left:1412px;top:130px;width:16px;height:17px;"><svg class="abs" style="left:3px;top:5px" width="7" height="4" viewBox="0 0 7 4"><path d="M0 4h7L3.500 0.300z" fill="#000"/></svg></div>
<div class="abs sbtn" style="left:1412px;top:147px;width:16px;height:309px;"></div>
<div class="abs sbtn" style="left:1412px;top:756px;width:16px;height:17px;"><svg class="abs" style="left:3px;top:5px" width="7" height="4" viewBox="0 0 7 4"><path d="M0 0h7L3.500 3.700z" fill="#000"/></svg></div>
<!-- horizontal scrollbar -->
<div class="abs dith" style="left:31px;top:773px;width:1381px;height:15px;"></div>
<div class="abs" style="left:31px;top:773px;width:1381px;height:1px;background:#f8faf8"></div>
<div class="abs sbtn" style="left:31px;top:773px;width:16px;height:15px;"><svg class="abs" style="left:4px;top:3px" width="4" height="7" viewBox="0 0 4 7"><path d="M4 0v7L0.300 3.500z" fill="#000"/></svg></div>
<div class="abs sbtn" style="left:47px;top:773px;width:1193px;height:15px;"></div>
<div class="abs sbtn" style="left:1396px;top:773px;width:16px;height:15px;"><svg class="abs" style="left:5px;top:3px" width="4" height="7" viewBox="0 0 4 7"><path d="M0 0v7L3.700 3.500z" fill="#000"/></svg></div>
<div class="abs" style="left:1412px;top:773px;width:16px;height:15px;background:#d4d0c8"></div>
<!-- right side tabs -->
<div class="abs rtab" style="left:1436px;top:75px;height:103px;">
  <svg class="abs" style="left:2px;top:3px" width="16" height="17" viewBox="0 0 16 17">
    <rect x="6.500" y="4.500" width="8" height="10" fill="#dce6fa" stroke="#4870c8"/>
    <rect x="13" y="5" width="2" height="9" fill="#5a88f0"/>
    <path d="M7 0.500h5v3l-1.500 2.500h-2l-1.500-2.500z" fill="#f4c838" stroke="#b08820" stroke-width="0.600"/>
    <circle cx="7" cy="8.500" r="3" fill="#e0ecfa" stroke="#88a8d8" stroke-width="1.100"/>
    <path d="M4.800 11l-3.300 3.300" stroke="#d09828" stroke-width="1.700"/>
  </svg>
  <div class="abs vtext" style="left:1px;top:21px;">Project Explorer</div>
</div>
<div class="abs rtab" style="left:1436px;top:178px;height:91px;border-top:none;">
  <svg class="abs" style="left:2px;top:3px" width="17" height="17" viewBox="0 0 17 17">
    <rect x="5.500" y="1.500" width="10" height="12" fill="#e8eefc" stroke="#5078c8"/>
    <rect x="13.500" y="2" width="2" height="11" fill="#7098e8"/>
    <rect x="2.500" y="4.500" width="9" height="10" fill="#dce4f8" stroke="#5078c8"/>
    <rect x="0.500" y="3.500" width="7" height="6" rx="0.500" fill="#f4c030" stroke="#b08418" stroke-width="0.800"/>
  </svg>
  <div class="abs vtext" style="left:1px;top:20px;">Data Sources</div>
</div>
<div class="abs rtab" style="left:1436px;top:284px;height:74px;">
  <svg class="abs" style="left:2px;top:3px" width="17" height="17" viewBox="0 0 17 17">
    <rect x="1.500" y="1.500" width="11" height="11" fill="#f4f6fc" stroke="#6080c0"/>
    <rect x="1.500" y="1.500" width="11" height="2" fill="#98b4ec"/>
    <path d="M3 6.500h3M7.500 6.500h4M3 9.500h3" stroke="#5888e0"/>
    <path d="M9 16l-1-4 1.500-3 1 2 0.500-3.500 1.500 0.500v3l2.500 1v4z" fill="#f0c038" stroke="#7c5c10" stroke-width="0.800"/>
    <rect x="9" y="15" width="6" height="1.500" fill="#209838"/>
  </svg>
  <div class="abs vtext" style="left:1px;top:21px;">Properties</div>
</div>


<!-- Find results tab -->
<div class="abs" style="left:29px;top:797px;width:83px;height:20px;border:1px solid #808080;border-bottom:none;background:linear-gradient(180deg,#d9d6ce 0,#d4d0c8 100%);">
  <svg class="abs" style="left:2px;top:2px" width="16" height="16" viewBox="0 0 16 16">
    <rect x="0.500" y="0.500" width="13" height="9" fill="#fff" stroke="#a8b4d0"/>
    <rect x="0" y="0" width="14" height="2" fill="#3c6ce0"/>
    <path d="M2 4.500h10M2 6.500h9" stroke="#28448c"/>
    <path d="M1 10.500h12" stroke="#8090b0"/>
    <path d="M6.500 15v-3.500l1.500-2.500h1.200v6zM14.500 15v-3.500l-1.500-2.500h-1.200v6z" fill="#505050" stroke="#303030" stroke-width="0.700"/>
    <rect x="9.200" y="10.500" width="2.600" height="2" fill="#484848"/>
    <rect x="7.500" y="12" width="1" height="2" fill="#c0c0c0"/><rect x="12.500" y="12" width="1" height="2" fill="#c0c0c0"/>
  </svg>
  <div class="abs" style="left:21px;top:2px;font-size:11px;line-height:14px;color:#404040;white-space:nowrap;letter-spacing:-0.33px;">Find Results</div>
</div>
<!-- status bar -->
<div class="abs" id="status" style="left:2px;top:817px;width:1456px;height:22px;background:#d4d0c8;">
  <span style="left:10px">Ready</span>
  <span style="left:1136px">Ln 1</span>
  <span style="left:1208px">Col 1</span>
  <span style="left:1288px">Ch 1</span>
  <span style="left:1409px">INS</span>
  <svg class="abs" style="left:1441px;top:8px" width="13" height="13" viewBox="0 0 13 13">
    <path d="M12 1L1 12M12 5L5 12M12 9L9 12" stroke="#808080" stroke-width="1"/>
    <path d="M12 2L2 12M12 6L6 12M12 10L10 12" stroke="#fff" stroke-width="1"/>
    <path d="M12 0L0 12M12 4L4 12M12 8L8 12" stroke="#808080" stroke-width="1"/>
  </svg>
</div>

<div class="abs" id="edge-l"></div><div class="abs" id="edge-t"></div>
<div class="abs" id="edge-r1"></div><div class="abs" id="edge-r2"></div>
<div class="abs" id="edge-b1"></div><div class="abs" id="edge-b2"></div>
</div>
</body>
</html>
